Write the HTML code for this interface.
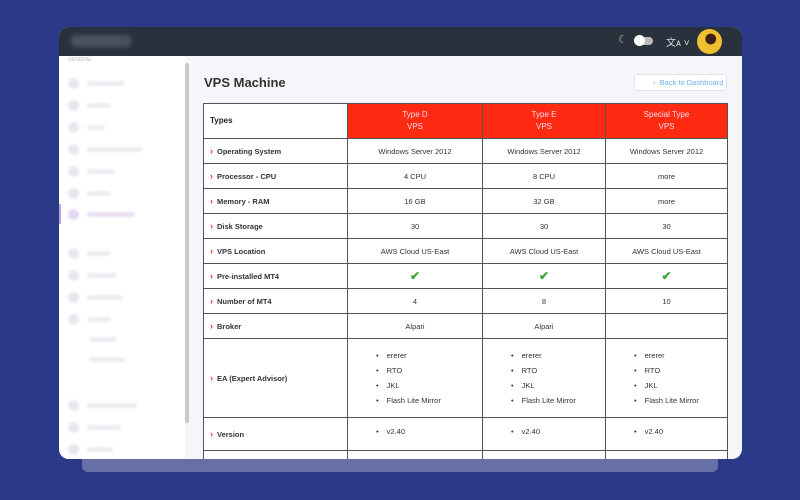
<!DOCTYPE html>
<html><head><style>
*{margin:0;padding:0;box-sizing:border-box}
body{width:800px;height:500px;background:#2a3a88;font-family:"Liberation Sans",sans-serif;position:relative;overflow:hidden}
.under{position:absolute;left:82px;top:440px;width:636px;height:32px;background:#6670a5;border-radius:6px}
.card{position:absolute;left:59px;top:27px;width:683px;height:432px;background:#f5f6f9;border-radius:10px;overflow:hidden}
.hdr{position:absolute;left:0;top:0;width:683px;height:29px;background:#29313d}
.side{position:absolute;left:0;top:29px;width:126px;height:403px;background:#fff}
.scroll{position:absolute;left:126px;top:36px;width:4px;height:360px;background:#c8c9cc;border-radius:2px}
.si{position:absolute;left:9px;height:10px;display:flex;align-items:center;gap:8px;filter:blur(1px)}
.si i{width:11px;height:11px;border-radius:50%;background:#e6e9ef;display:block}
.si b{height:5px;background:#ebedf1;border-radius:3px;display:block}
h1{position:absolute;left:145px;top:48px;font-size:13px;font-weight:bold;color:#333}
.back{position:absolute;left:575px;top:47px;width:93px;height:17px;border:1px solid #dde3ea;background:#fff;border-radius:3px;font-size:7.5px;color:#6bb3ef;line-height:15px;padding-left:18px}
table{position:absolute;left:144px;top:76px;border-collapse:collapse;font-size:7.5px;color:#333;background:#fff}
td{border:1px solid #555;text-align:center;vertical-align:middle;height:25px}
td.l{text-align:left;font-weight:bold;padding-left:6px}
td.l .a{color:#e8321e;font-size:9px;margin-right:4px}
.h td{background:#ff2a12;color:#fde;font-size:8px;line-height:12px;height:35px}
ul{list-style:none;text-align:left;padding-left:28px}
ul li{line-height:15px}
ul li:before{content:"•";margin-right:8px}
.ck{color:#3aa53a;font-size:12px;font-weight:bold}
</style></head><body>
<div class="under"></div>
<div class="card">
<div class="hdr">
 <div style="position:absolute;left:12px;top:8px;width:60px;height:12px;background:#4a5260;border-radius:4px;filter:blur(2px)"></div>
 <div style="position:absolute;left:559px;top:6px;color:#aaa;font-size:11px">☾</div>
 <div style="position:absolute;left:575px;top:10px;width:19px;height:8px;background:#bbb;border-radius:4px"></div>
 <div style="position:absolute;left:575px;top:8px;width:11px;height:11px;background:#fff;border-radius:50%"></div>
 <div style="position:absolute;left:607px;top:7px;color:#ddd;font-size:10px">文ᴀ ˅</div>
 <div style="position:absolute;left:638px;top:2px;width:25px;height:25px;border-radius:50%;background:radial-gradient(circle at 55% 40%,#3a2018 25%,#f0c030 28%,#f0c030 75%,#e05a20 100%)"></div>
</div>
<div class="side">
 <div style="position:absolute;left:9px;top:1px;font-size:5px;color:#bbb">GENERAL</div>
 <div class="si" style="top:22px"><i></i><b style="width:38px"></b></div>
 <div class="si" style="top:44px"><i></i><b style="width:24px"></b></div>
 <div class="si" style="top:66px"><i></i><b style="width:18px"></b></div>
 <div class="si" style="top:88px"><i></i><b style="width:56px"></b></div>
 <div class="si" style="top:110px"><i></i><b style="width:28px"></b></div>
 <div class="si" style="top:132px"><i></i><b style="width:24px"></b></div>
 <div style="position:absolute;left:0;top:148px;width:2px;height:20px;background:#b9a6e0"></div>
 <div class="si" style="top:153px"><i style="background:#e6d8f2"></i><b style="width:48px;background:#eadff3"></b></div>
 <div class="si" style="top:192px"><i></i><b style="width:24px"></b></div>
 <div class="si" style="top:214px"><i></i><b style="width:30px"></b></div>
 <div class="si" style="top:236px"><i></i><b style="width:36px"></b></div>
 <div class="si" style="top:258px"><i></i><b style="width:24px"></b></div>
 <div class="si" style="top:278px;left:30px"><b style="width:28px"></b></div>
 <div class="si" style="top:298px;left:30px"><b style="width:36px"></b></div>
 <div class="si" style="top:344px"><i></i><b style="width:50px"></b></div>
 <div class="si" style="top:366px"><i></i><b style="width:34px"></b></div>
 <div class="si" style="top:388px"><i></i><b style="width:26px"></b></div>
</div>
<div class="scroll"></div>
<h1>VPS Machine</h1>
<div class="back">‹&nbsp; Back to Dashboard</div>
<table>
<tr class="h"><td class="l" style="width:144px;background:#fff;color:#222;font-size:8px">Types</td><td style="width:135px">Type D<br>VPS</td><td style="width:123px">Type E<br>VPS</td><td style="width:122px">Special Type<br>VPS</td></tr>
<tr><td class="l"><span class="a">›</span>Operating System</td><td>Windows Server 2012</td><td>Windows Server 2012</td><td>Windows Server 2012</td></tr>
<tr><td class="l"><span class="a">›</span>Processor - CPU</td><td>4 CPU</td><td>8 CPU</td><td>more</td></tr>
<tr><td class="l"><span class="a">›</span>Memory - RAM</td><td>16 GB</td><td>32 GB</td><td>more</td></tr>
<tr><td class="l"><span class="a">›</span>Disk Storage</td><td>30</td><td>30</td><td>30</td></tr>
<tr><td class="l"><span class="a">›</span>VPS Location</td><td>AWS Cloud US-East</td><td>AWS Cloud US-East</td><td>AWS Cloud US-East</td></tr>
<tr><td class="l"><span class="a">›</span>Pre-installed MT4</td><td class="ck">✔</td><td class="ck">✔</td><td class="ck">✔</td></tr>
<tr><td class="l"><span class="a">›</span>Number of MT4</td><td>4</td><td>8</td><td>10</td></tr>
<tr><td class="l"><span class="a">›</span>Broker</td><td>Alpari</td><td>Alpari</td><td></td></tr>
<tr><td class="l" style="height:79px"><span class="a">›</span>EA (Expert Advisor)</td><td><ul><li>ererer</li><li>RTO</li><li>JKL</li><li>Flash Lite Mirror</li></ul></td><td><ul><li>ererer</li><li>RTO</li><li>JKL</li><li>Flash Lite Mirror</li></ul></td><td><ul><li>ererer</li><li>RTO</li><li>JKL</li><li>Flash Lite Mirror</li></ul></td></tr>
<tr><td class="l" style="height:33px"><span class="a">›</span>Version</td><td style="vertical-align:top;padding-top:6px"><ul><li>v2.40</li></ul></td><td style="vertical-align:top;padding-top:6px"><ul><li>v2.40</li></ul></td><td style="vertical-align:top;padding-top:6px"><ul><li>v2.40</li></ul></td></tr>
<tr><td class="l"></td><td></td><td></td><td></td></tr>
</table>
</div>
</body></html>
